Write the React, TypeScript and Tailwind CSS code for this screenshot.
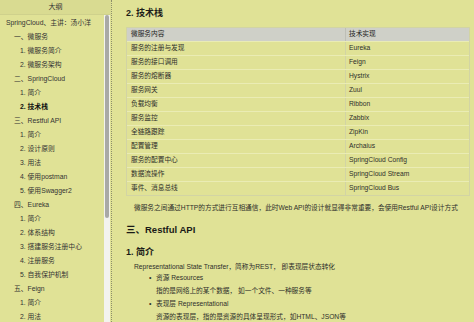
import React from "react";

const font = '"Liberation Sans", "Noto Sans CJK SC", sans-serif';

type Item = { label: string; level: 0 | 1 | 2; bold?: boolean };

const outline: Item[] = [
  { label: "SpringCloud、主讲：汤小洋", level: 0 },
  { label: "一、微服务", level: 1 },
  { label: "1. 微服务简介", level: 2 },
  { label: "2. 微服务架构", level: 2 },
  { label: "二、SpringCloud", level: 1 },
  { label: "1. 简介", level: 2 },
  { label: "2. 技术栈", level: 2, bold: true },
  { label: "三、Restful API", level: 1 },
  { label: "1. 简介", level: 2 },
  { label: "2. 设计原则", level: 2 },
  { label: "3. 用法", level: 2 },
  { label: "4. 使用postman", level: 2 },
  { label: "5. 使用Swagger2", level: 2 },
  { label: "四、Eureka", level: 1 },
  { label: "1. 简介", level: 2 },
  { label: "2. 体系结构", level: 2 },
  { label: "3. 搭建服务注册中心", level: 2 },
  { label: "4. 注册服务", level: 2 },
  { label: "5. 自我保护机制", level: 2 },
  { label: "五、Feign", level: 1 },
  { label: "1. 简介", level: 2 },
  { label: "2. 用法", level: 2 },
];

const stack = [
  ["服务的注册与发现", "Eureka"],
  ["服务的接口调用", "Feign"],
  ["服务的熔断器", "Hystrix"],
  ["服务网关", "Zuul"],
  ["负载均衡", "Ribbon"],
  ["服务监控", "Zabbix"],
  ["全链路跟踪", "ZipKin"],
  ["配置管理", "Archaius"],
  ["服务的配置中心", "SpringCloud Config"],
  ["数据流操作", "SpringCloud Stream"],
  ["事件、消息总线", "SpringCloud Bus"],
];

const indent = { 0: "pl-[6px]", 1: "pl-[14px]", 2: "pl-[20px]" };

const Sidebar = () => (
  <aside className="w-[112px] h-full flex flex-col border-r border-dotted border-[#8d8f6a] shrink-0">
    <div className="h-[15px] flex items-center justify-center bg-[#d9db91] border-b border-[#cfd18c] text-[7px] text-[#333]">
      大纲
    </div>
    <div className="flex flex-1 min-h-0">
      <ul className="flex-1 pt-[1px] text-[6.8px] text-[#333]">
        {outline.map((item, i) => (
          <li
            key={i}
            className={`h-[14px] leading-[14px] whitespace-nowrap ${indent[item.level]} ${item.bold ? "font-bold text-[#111]" : ""}`}
          >
            {item.label}
          </li>
        ))}
      </ul>
      {/* scrollbar */}
      <div className="w-[6px] mr-[1px] bg-[#f3f3ee] flex flex-col">
        <div className="h-[203px] mx-[1px] rounded-[2px] bg-[#a9a9a6]" />
      </div>
    </div>
  </aside>
);

const Bullet = ({ children, h }: { children: React.ReactNode; h: string }) => (
  <div className={`flex items-center ${h} pl-[23px]`}>
    <span className="w-[7px] text-[7px]">•</span>
    <span>{children}</span>
  </div>
);

export default function App() {
  return (
    <div
      className="w-[474px] h-[322px] overflow-hidden flex bg-[#e0e296] text-[#2e2e2a]"
      style={{ fontFamily: font }}
    >
      <Sidebar />

      <main className="flex-1 pl-[14px] pr-[4px] pt-[6px] text-[6.7px]">
        <h3 className="h-[14px] leading-[14px] text-[9px] font-bold text-[#1e1e1a]">2. 技术栈</h3>

        {/* tech stack table */}
        <div className="mt-[7px] border border-[#d2d4a4]">
          <div className="flex h-[13px] items-center bg-[#cfd0c8] text-[#222]">
            <div className="w-[219px] pl-[4px] border-r border-[#bdbeb6] h-full flex items-center">微服务内容</div>
            <div className="flex-1 pl-[3px]">技术实现</div>
          </div>
          {stack.map(([what, tool]) => (
            <div key={what} className="flex h-[14px] items-center border-t border-[#eaecb4]">
              <div className="w-[219px] pl-[4px] border-r border-[#d2d4a4] h-full flex items-center">{what}</div>
              <div className="flex-1 pl-[3px]">{tool}</div>
            </div>
          ))}
        </div>

        <p className="mt-[5px] pl-[8px] h-[14px] leading-[14px] whitespace-nowrap">
          微服务之间通过HTTP的方式进行互相通信，此时Web API的设计就显得非常重要，会使用Restful API设计方式
        </p>

        <h2 className="mt-[7px] h-[16px] leading-[16px] text-[9.5px] font-bold text-[#1a1a16]">三、Restful API</h2>
        <h3 className="mt-[7px] h-[14px] leading-[14px] text-[9px] font-bold text-[#1a1a16]">1. 简介</h3>

        <div className="mt-[3px] whitespace-nowrap">
          <div className="h-[10px] flex items-center pl-[8px]">
            Representational State Transfer，简称为REST， 即表现层状态转化
          </div>
          <Bullet h="h-[12px]">资源 Resources</Bullet>
          <div className="h-[14px] flex items-center pl-[30px]">指的是网络上的某个数据， 如一个文件、一种服务等</div>
          <Bullet h="h-[13px]">表现层 Representational</Bullet>
          <div className="h-[13px] flex items-center pl-[30px]">资源的表现层，指的是资源的具体呈现形式，如HTML、JSON等</div>
        </div>
      </main>
    </div>
  );
}
